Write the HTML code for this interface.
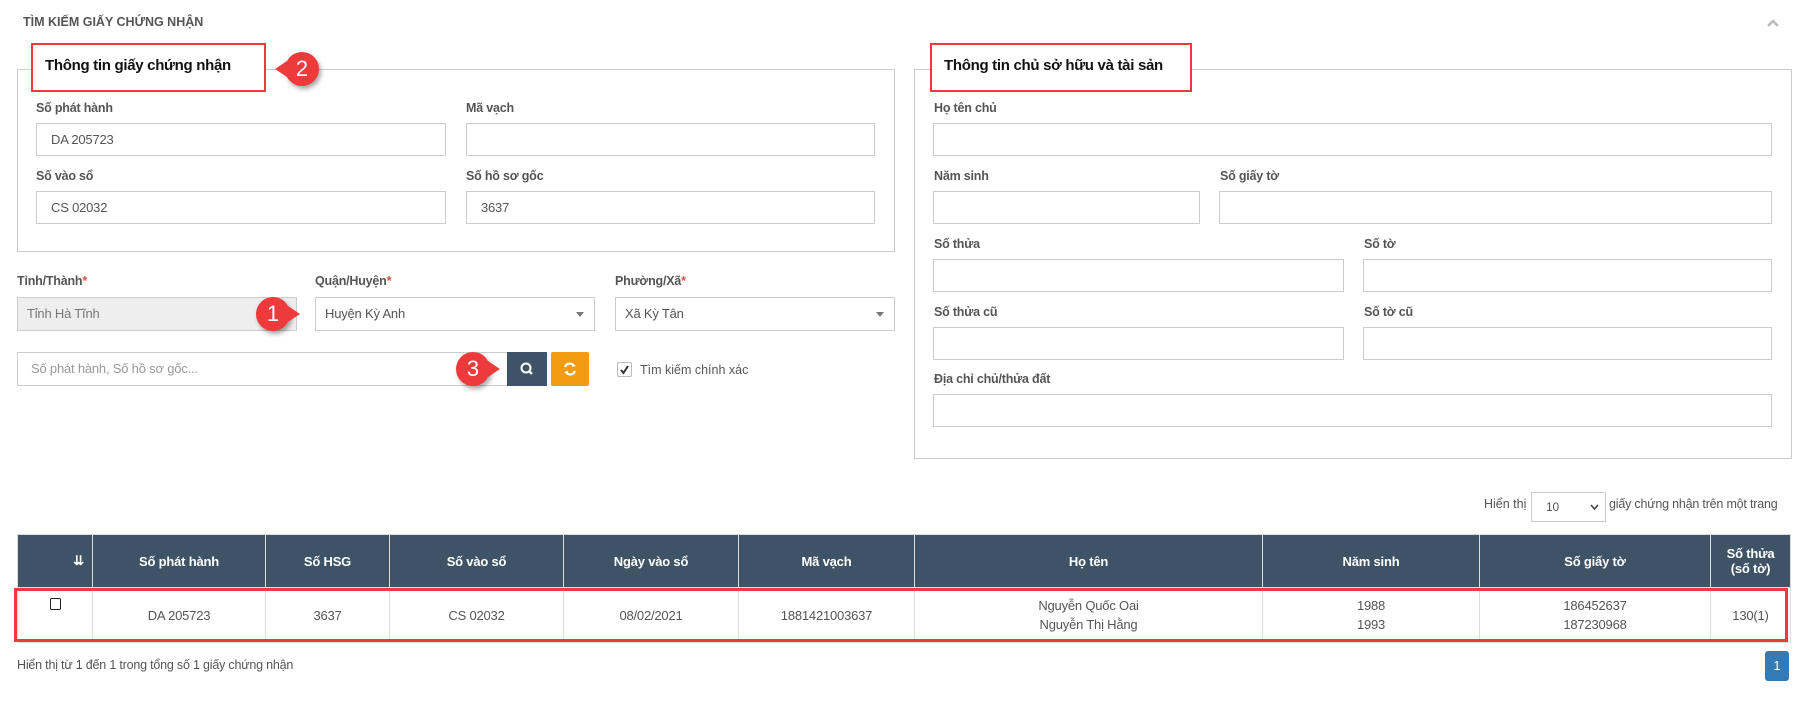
<!DOCTYPE html>
<html><head><meta charset="utf-8"><style>
*{box-sizing:border-box;margin:0;padding:0}
body{width:1808px;height:707px;background:#fff;font-family:"Liberation Sans",Arial,sans-serif;color:#555;position:relative;overflow:hidden;font-size:13px}
.a{position:absolute}
.lbl{position:absolute;font-size:12.5px;font-weight:bold;color:#555;letter-spacing:-0.2px}
.in{position:absolute;border:1px solid #ccc;background:#fff;height:33px;font-size:13px;color:#555;padding:0 14px;line-height:31px;letter-spacing:-0.2px}
.fs{position:absolute;border:1px solid #ccc}
.leg{position:absolute;border:2px solid #f0393c;background:#fff;font-weight:bold;font-size:15px;color:#111;line-height:41px;padding-left:12px;letter-spacing:-0.3px}
.arrow{position:absolute;right:10px;top:14px;width:0;height:0;border-left:4px solid transparent;border-right:4px solid transparent;border-top:5px solid #777}
.star{color:#e74c3c}
.badge{position:absolute;width:34px;height:34px;border-radius:50%;background:#ef3a3c;color:#fff;font-size:22px;text-align:center;line-height:34px;box-shadow:2px 3px 5px rgba(0,0,0,.35)}
.badge i{position:absolute;top:9px;width:0;height:0;border-top:8px solid transparent;border-bottom:8px solid transparent}
table{position:absolute;left:17px;top:534px;width:1774px;border-collapse:collapse;font-size:13px;letter-spacing:-0.2px}
th{background:#3f5366;color:#fff;font-weight:bold;height:53px;border:1px solid #ddd;text-align:center;font-size:13px}
td{height:55px;border:1px solid #ddd;text-align:center;color:#555;line-height:19px}
</style></head><body>
<div class="a" style="left:23px;top:15px;font-size:12.5px;font-weight:bold;color:#555">TÌM KIẾM GIẤY CHỨNG NHẬN</div>
<svg class="a" style="left:1766px;top:18px" width="14" height="10"><path d="M2 8 L7 3 L12 8" stroke="#bbb" stroke-width="2.5" fill="none"/></svg>

<div class="fs" style="left:17px;top:69px;width:878px;height:183px"></div>
<div class="leg" style="left:31px;top:43px;width:235px;height:49px">Thông tin giấy chứng nhận</div>
<div class="badge" style="left:285px;top:52px">2<i style="left:-10px;border-right:12px solid #ef3a3c"></i></div>
<div class="lbl" style="left:36px;top:101px">Số phát hành</div>
<div class="lbl" style="left:466px;top:101px">Mã vạch</div>
<div class="in" style="left:36px;top:123px;width:410px">DA 205723</div>
<div class="in" style="left:466px;top:123px;width:409px"></div>
<div class="lbl" style="left:36px;top:169px">Số vào sổ</div>
<div class="lbl" style="left:466px;top:169px">Số hồ sơ gốc</div>
<div class="in" style="left:36px;top:191px;width:410px">CS 02032</div>
<div class="in" style="left:466px;top:191px;width:409px">3637</div>

<div class="lbl" style="left:17px;top:274px">Tỉnh/Thành<span class="star">*</span></div>
<div class="lbl" style="left:315px;top:274px">Quận/Huyện<span class="star">*</span></div>
<div class="lbl" style="left:615px;top:274px">Phường/Xã<span class="star">*</span></div>
<div class="in" style="left:17px;top:297px;width:280px;height:34px;background:#eee;color:#777;padding-left:9px">Tỉnh Hà Tĩnh</div>
<div class="in" style="left:315px;top:297px;width:280px;height:34px;padding-left:9px">Huyện Kỳ Anh<span class="arrow"></span></div>
<div class="in" style="left:615px;top:297px;width:280px;height:34px;padding-left:9px">Xã Kỳ Tân<span class="arrow"></span></div>
<div class="badge" style="left:256px;top:297px">1<i style="right:-10px;border-left:12px solid #ef3a3c"></i></div>

<div class="in" style="left:17px;top:352px;width:491px;height:34px;color:#999;padding-left:13px">Số phát hành, Số hồ sơ gốc...</div>
<div class="a" style="left:507px;top:352px;width:40px;height:34px;background:#3f5366"><svg width="40" height="34"><circle cx="19" cy="16" r="4.5" stroke="#fff" stroke-width="2" fill="none"/><path d="M22 19 L25 22" stroke="#fff" stroke-width="2.5"/></svg></div>
<div class="a" style="left:551px;top:352px;width:38px;height:34px;background:#f39c12;border-radius:2px"><svg width="38" height="34"><path d="M14 15 A5 5 0 0 1 23 14 M24 19 A5 5 0 0 1 15 20" stroke="#fff" stroke-width="2.2" fill="none"/><path d="M21 11 L25 14 L21 15Z M17 23 L13 20 L17 19Z" fill="#fff"/></svg></div>
<div class="badge" style="left:456px;top:352px">3<i style="right:-10px;border-left:12px solid #ef3a3c"></i></div>
<div class="a" style="left:617px;top:362px;width:15px;height:15px;border:1px solid #bbb;border-radius:2px"><svg width="13" height="13"><path d="M3 7 L5.5 10 L10 3" stroke="#333" stroke-width="2" fill="none"/></svg></div>
<div class="a" style="left:640px;top:363px;font-size:12.5px">Tìm kiếm chính xác</div>

<div class="fs" style="left:914px;top:69px;width:878px;height:390px"></div>
<div class="leg" style="left:930px;top:43px;width:262px;height:49px">Thông tin chủ sở hữu và tài sản</div>
<div class="lbl" style="left:934px;top:101px">Họ tên chủ</div>
<div class="in" style="left:933px;top:123px;width:839px"></div>
<div class="lbl" style="left:934px;top:169px">Năm sinh</div>
<div class="lbl" style="left:1220px;top:169px">Số giấy tờ</div>
<div class="in" style="left:933px;top:191px;width:267px"></div>
<div class="in" style="left:1219px;top:191px;width:553px"></div>
<div class="lbl" style="left:934px;top:237px">Số thửa</div>
<div class="lbl" style="left:1364px;top:237px">Số tờ</div>
<div class="in" style="left:933px;top:259px;width:411px"></div>
<div class="in" style="left:1363px;top:259px;width:409px"></div>
<div class="lbl" style="left:934px;top:305px">Số thửa cũ</div>
<div class="lbl" style="left:1364px;top:305px">Số tờ cũ</div>
<div class="in" style="left:933px;top:327px;width:411px"></div>
<div class="in" style="left:1363px;top:327px;width:409px"></div>
<div class="lbl" style="left:934px;top:372px">Địa chỉ chủ/thửa đất</div>
<div class="in" style="left:933px;top:394px;width:839px"></div>

<div class="a" style="left:1484px;top:497px;font-size:12.5px">Hiển thị</div>
<div class="in" style="left:1531px;top:492px;width:75px;height:30px;line-height:28px;font-size:12px;padding-left:14px">10<svg style="position:absolute;right:6px;top:11px" width="9" height="7"><path d="M1 1 L4.5 5 L8 1" stroke="#444" stroke-width="1.6" fill="none"/></svg></div>
<div class="a" style="left:1609px;top:497px;font-size:12.5px;letter-spacing:-0.2px">giấy chứng nhận trên một trang</div>

<table>
<tr><th style="width:75px;text-align:right;padding-right:8px">⇊</th><th style="width:173px">Số phát hành</th><th style="width:124px">Số HSG</th><th style="width:174px">Số vào sổ</th><th style="width:175px">Ngày vào sổ</th><th style="width:176px">Mã vạch</th><th style="width:348px">Họ tên</th><th style="width:217px">Năm sinh</th><th style="width:231px">Số giấy tờ</th><th>Số thửa<br>(số tờ)</th></tr>
<tr><td style="vertical-align:top;padding-top:8px"><span style="display:inline-block;width:11px;height:12px;border:1.5px solid #222;border-radius:2px"></span></td><td>DA 205723</td><td>3637</td><td>CS 02032</td><td>08/02/2021</td><td>1881421003637</td><td>Nguyễn Quốc Oai<br>Nguyễn Thị Hằng</td><td>1988<br>1993</td><td>186452637<br>187230968</td><td>130(1)</td></tr>
</table>
<div class="a" style="left:14px;top:588px;width:1774px;height:54px;border:3px solid #f0393c"></div>

<div class="a" style="left:17px;top:658px;font-size:12.5px;letter-spacing:-0.2px">Hiển thị từ 1 đến 1 trong tổng số 1 giấy chứng nhận</div>
<div class="a" style="left:1765px;top:651px;width:24px;height:30px;background:#337ab7;border-radius:3px;color:#fff;text-align:center;line-height:30px;font-size:13px">1</div>
</body></html>
